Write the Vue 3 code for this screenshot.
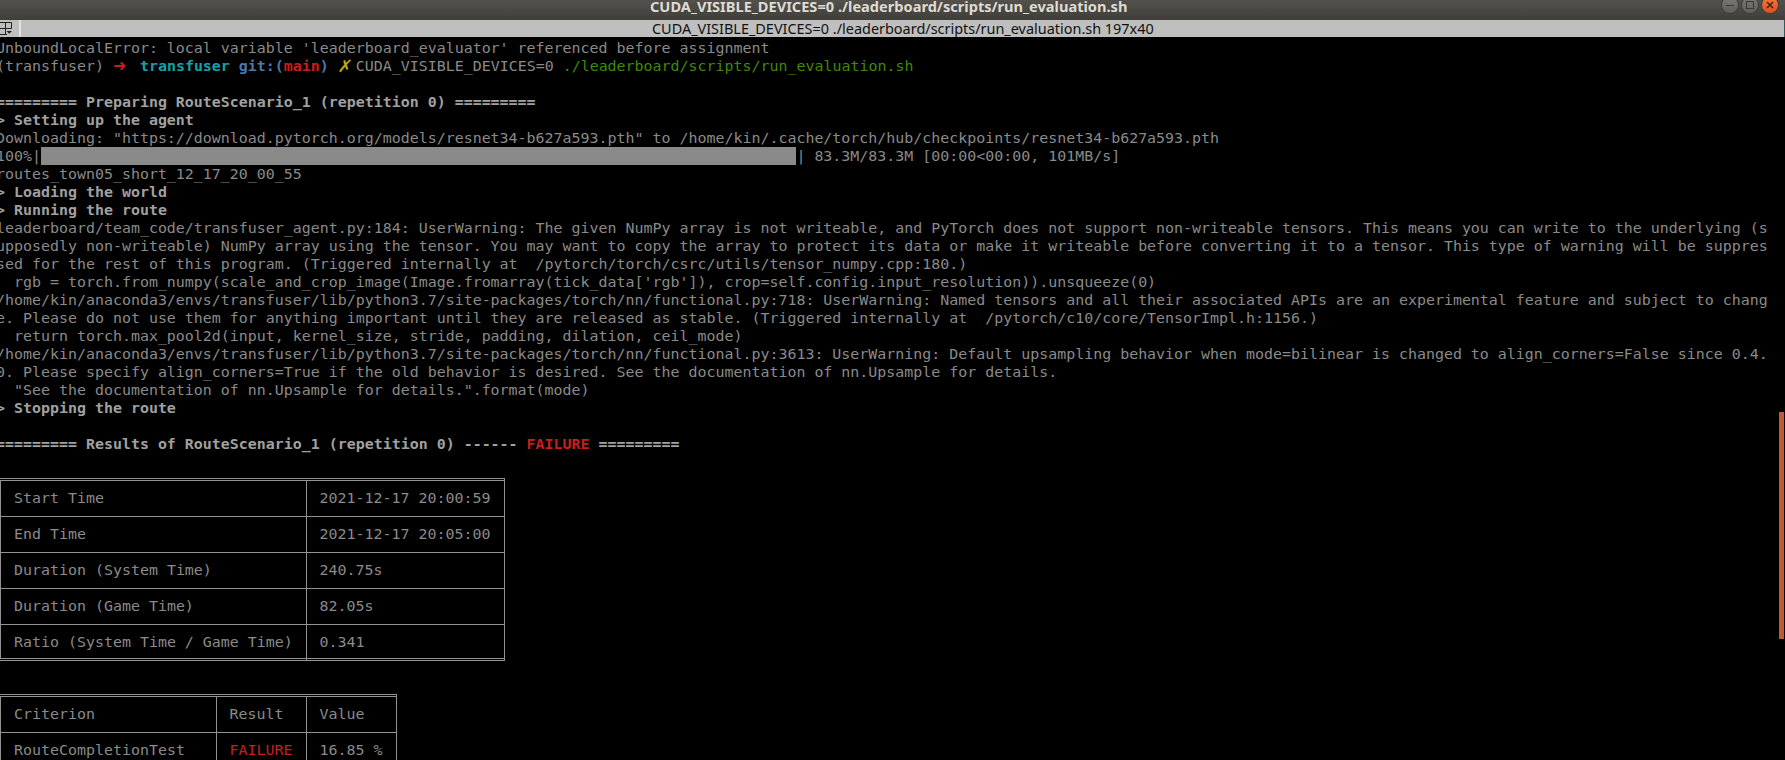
<script setup>
const plainTop = [
  { t: "> Setting up the agent", b: true },
  { t: 'Downloading: "https://download.pytorch.org/models/resnet34-b627a593.pth" to /home/kin/.cache/torch/hub/checkpoints/resnet34-b627a593.pth' },
]
const log = [
  { t: "routes_town05_short_12_17_20_00_55" },
  { t: "> Loading the world", b: true },
  { t: "> Running the route", b: true },
  { t: "leaderboard/team_code/transfuser_agent.py:184: UserWarning: The given NumPy array is not writeable, and PyTorch does not support non-writeable tensors. This means you can write to the underlying (s" },
  { t: "upposedly non-writeable) NumPy array using the tensor. You may want to copy the array to protect its data or make it writeable before converting it to a tensor. This type of warning will be suppres" },
  { t: "sed for the rest of this program. (Triggered internally at  /pytorch/torch/csrc/utils/tensor_numpy.cpp:180.)" },
  { t: "  rgb = torch.from_numpy(scale_and_crop_image(Image.fromarray(tick_data['rgb']), crop=self.config.input_resolution)).unsqueeze(0)" },
  { t: "/home/kin/anaconda3/envs/transfuser/lib/python3.7/site-packages/torch/nn/functional.py:718: UserWarning: Named tensors and all their associated APIs are an experimental feature and subject to chang" },
  { t: "e. Please do not use them for anything important until they are released as stable. (Triggered internally at  /pytorch/c10/core/TensorImpl.h:1156.)" },
  { t: "  return torch.max_pool2d(input, kernel_size, stride, padding, dilation, ceil_mode)" },
  { t: "/home/kin/anaconda3/envs/transfuser/lib/python3.7/site-packages/torch/nn/functional.py:3613: UserWarning: Default upsampling behavior when mode=bilinear is changed to align_corners=False since 0.4." },
  { t: "0. Please specify align_corners=True if the old behavior is desired. See the documentation of nn.Upsample for details." },
  { t: '  "See the documentation of nn.Upsample for details.".format(mode)' },
  { t: "> Stopping the route", b: true },
]
const summary = [
  ["Start Time", "2021-12-17 20:00:59"],
  ["End Time", "2021-12-17 20:05:00"],
  ["Duration (System Time)", "240.75s"],
  ["Duration (Game Time)", "82.05s"],
  ["Ratio (System Time / Game Time)", "0.341"],
]
</script>

<template>
  <div class="window">
    <header class="titlebar">
      <span class="title">CUDA_VISIBLE_DEVICES=0 ./leaderboard/scripts/run_evaluation.sh</span>
      <div class="controls">
        <span class="wbtn"><i class="min"></i></span>
        <span class="wbtn"><i class="max"></i></span>
        <span class="wbtn close">
          <svg width="8" height="8" viewBox="0 0 8 8"><path d="M1 1 7 7M7 1 1 7" stroke="#3f2418" stroke-width="1.6" fill="none" /></svg>
        </span>
      </div>
    </header>
    <div class="tabbar">
      <svg class="tabicon" width="13" height="15" viewBox="0 0 13 15">
        <path d="M0 0.5H11.5V6.5H0M5.5 0.5V12.5M0 12.5H7" stroke="#222" fill="none" />
        <path d="M6.5 9H12L9.2 11.8Z" fill="#222" />
      </svg>
      <span class="tabsep"></span>
      <span class="tabtitle">CUDA_VISIBLE_DEVICES=0 ./leaderboard/scripts/run_evaluation.sh 197x40</span>
    </div>
    <main class="term">
      <div class="line">UnboundLocalError: local variable 'leaderboard_evaluator' referenced before assignment</div>
      <div class="line">{{ "(transfuser) " }}<span class="sym arrow red">➜</span>{{ "  " }}<span class="cyan b">transfuser</span>{{ " " }}<span class="blue b">git:(</span><span class="red b">main</span><span class="blue b">)</span>{{ " " }}<span class="sym cross yellow">✗</span>{{ " CUDA_VISIBLE_DEVICES=0 " }}<span class="green">./leaderboard/scripts/run_evaluation.sh</span></div>
      <div class="line"></div>
      <div class="line b">========= Preparing RouteScenario_1 (repetition 0) =========</div>
      <div v-for="l in plainTop" :key="l.t" class="line" :class="{ b: l.b }">{{ l.t }}</div>
      <div class="line">100%|<span class="bar"></span>| 83.3M/83.3M [00:00&lt;00:00, 101MB/s]</div>
      <div v-for="l in log" :key="l.t" class="line" :class="{ b: l.b }">{{ l.t }}</div>
      <div class="line"></div>
      <div class="line b">========= Results of RouteScenario_1 (repetition 0) ------ <span class="red">FAILURE</span> =========</div>
      <div class="line"></div>

      <div class="table summary">
        <template v-for="r in summary" :key="r[0]">
          <div class="cell">{{ r[0] }}</div>
          <div class="cell">{{ r[1] }}</div>
        </template>
      </div>

      <div class="table criteria">
        <div class="cell">Criterion</div>
        <div class="cell">Result</div>
        <div class="cell">Value</div>
        <div class="cell">RouteCompletionTest</div>
        <div class="cell red">FAILURE</div>
        <div class="cell">16.85 %</div>
      </div>
    </main>
    <span class="scrollthumb"></span>
  </div>
</template>

<style scoped>
.window {
  position: relative;
  width: 1785px;
  height: 760px;
  overflow: hidden;
  background: #000;
  font-family: "DejaVu Sans Mono", monospace;
}
.titlebar {
  height: 20px;
  display: flex;
  align-items: flex-start;
  padding: 0 7px 0 650px;
  box-sizing: border-box;
  background: linear-gradient(#54514c, #3f3e3a);
  color: #dfdbd2;
  font: 700 14.6px/13px "Noto Sans", sans-serif;
  overflow: hidden;
}
.title {
  white-space: pre;
}
.controls {
  margin-left: auto;
  margin-top: -3px;
  display: flex;
  gap: 4px;
}
.wbtn {
  width: 16px;
  height: 16px;
  border-radius: 50%;
  background: linear-gradient(#7b7a75, #5e5d58);
  box-shadow: 0 0 0 1px #3e3d39;
  display: flex;
  align-items: center;
  justify-content: center;
}
.wbtn.close {
  background: linear-gradient(#f5793f, #e0501e);
}
.min {
  display: block;
  width: 8px;
  height: 1px;
  background: #3a3935;
}
.max {
  display: block;
  width: 6px;
  height: 6px;
  border: 1px solid #3a3935;
}
.tabbar {
  height: 17px;
  display: flex;
  align-items: center;
  background: #c0bfbf;
  border-right: 1px solid #2e5a5a;
  color: #111;
  font: 400 14.45px/17px "Noto Sans", sans-serif;
}
.tabicon {
  flex: none;
  margin-top: 1px;
}
.tabsep {
  width: 2px;
  height: 17px;
  margin-left: 6px;
  background: #e2e2e2;
}
.tabtitle {
  margin-left: 631px;
  white-space: pre;
}
.term {
  padding: 2px 0 0;
  margin-left: -4px;
  color: #8a8a8a;
  font-size: 14.95px;
  line-height: 18px;
}
.line {
  height: 18px;
  white-space: pre;
}
.b {
  font-weight: 700;
  color: #a0a0a0;
}
.red {
  color: #c81e1e;
}
.cyan {
  color: #13a3a6;
}
.blue {
  color: #4a78ab;
}
.yellow {
  color: #c9a800;
}
.green {
  color: #3f8a06;
}
.sym {
  display: inline-block;
  width: 9px;
  height: 18px;
  vertical-align: top;
  font-family: "DejaVu Sans", sans-serif;
  font-weight: 700;
  white-space: pre;
}
.arrow {
  font-size: 16px;
}
.cross {
  font-size: 17px;
  transform: skewX(-8deg);
}
.bar {
  display: inline-block;
  width: 84ch;
  height: 18px;
  vertical-align: top;
  background: #8a8a8a;
}
.table {
  margin-left: 4px;
  display: grid;
  border-style: double solid;
  border-width: 3px 1px;
  border-color: #929292;
  box-sizing: border-box;
}
.summary {
  margin-top: 7px;
  width: 505px;
  grid-template-columns: 305.5px 1fr;
  grid-auto-rows: 36px;
  height: 183px;
}
.criteria {
  margin-top: 33px;
  width: 397px;
  grid-template-columns: 215.5px 90px 1fr;
  grid-auto-rows: 36px;
}
.cell {
  padding-left: 13px;
  line-height: 34px;
  white-space: pre;
  box-sizing: border-box;
  border-bottom: 1px solid #929292;
}
.summary .cell:nth-child(odd) {
  border-right: 1px solid #929292;
}
.summary .cell:nth-last-child(-n + 2) {
  border-bottom: 0;
}
.criteria .cell:not(:nth-child(3n)) {
  border-right: 1px solid #929292;
}
.scrollthumb {
  position: absolute;
  left: 1779px;
  top: 412px;
  width: 5px;
  height: 227px;
  background: #c25c2f;
}
</style>
